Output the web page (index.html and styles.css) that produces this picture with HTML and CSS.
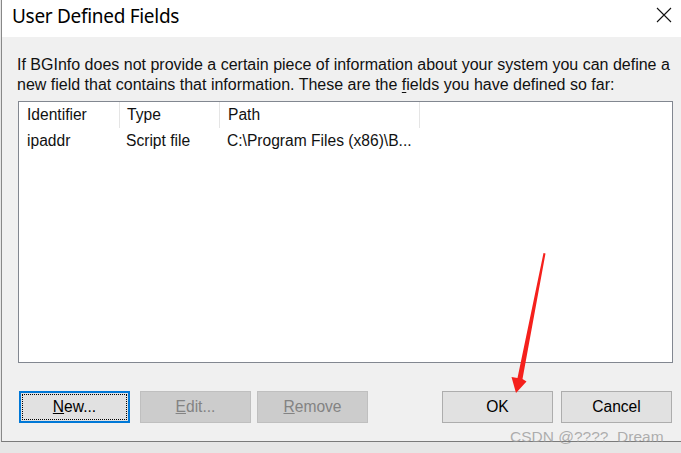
FILE: index.html
```html
<!DOCTYPE html>
<html>
<head>
<meta charset="utf-8">
<link rel="stylesheet" href="styles.css">
</head>
<body>
<div class="window">
  <div class="titlebar">
    <span class="title">User Defined Fields</span>
    <svg class="close" width="16" height="16" viewBox="0 0 16 16"><path d="M1 1 L15 15 M15 1 L1 15" stroke="#111" stroke-width="1.1" fill="none"/></svg>
  </div>
  <div class="body">
    <p class="intro">If BGInfo does not provide a certain piece of information about your system you can define a new field that contains that information. These are the <u>f</u>ields you have defined so far:</p>
    <div class="listbox">
      <div class="row header">
        <div class="cell c1">Identifier</div>
        <div class="cell c2">Type</div>
        <div class="cell c3">Path</div>
      </div>
      <div class="row">
        <div class="cell c1">ipaddr</div>
        <div class="cell c2">Script file</div>
        <div class="cell c3">C:\Program Files (x86)\B...</div>
      </div>
    </div>
    <div class="buttons">
      <div class="group left">
        <button class="btn focus"><span class="focusrect"><u>N</u>ew...</span></button>
        <button class="btn disabled"><u>E</u>dit...</button>
        <button class="btn disabled r"><u>R</u>emove</button>
      </div>
      <div class="group right">
        <button class="btn">OK</button>
        <button class="btn">Cancel</button>
      </div>
    </div>
  </div>
</div>
<div class="watermark">CSDN @????&nbsp; Dream</div>
<svg class="arrow" width="681" height="453" viewBox="0 0 681 453"><polygon points="543.5,253 545.5,253.5 522.5,379 526.5,381.5 516,393 511.5,377 517.5,378" fill="#f5201c"/></svg>
</body>
</html>
```
FILE: styles.css
```css
* { box-sizing: border-box; }
html, body { margin: 0; padding: 0; }
body {
  width: 681px;
  height: 453px;
  overflow: hidden;
  background: #e6e6e6;
  position: relative;
  font-family: "Liberation Sans", Arial, sans-serif;
  color: #000;
}
.window {
  margin-left: 1px;
  width: 680px;
  height: 442px;
  border-left: 1px solid #888;
  border-bottom: 1px solid #7a7a7a;
  background: #f0f0f0;
  display: flex;
  flex-direction: column;
}
.titlebar {
  height: 37px;
  background: #fff;
  display: flex;
  align-items: center;
  justify-content: space-between;
  padding-left: 10px;
  padding-right: 9px;
}
.title {
  font-family: "Noto Sans", "Open Sans", sans-serif;
  font-size: 19px;
  letter-spacing: -0.3px;
  margin-top: -6px;
}
.close { margin-top: -7px; }
.body {
  flex: 1;
  padding: 18px 0 0 15px;
  display: flex;
  flex-direction: column;
}
.intro {
  margin: 0;
  font-size: 16px;
  line-height: 20px;
  width: 662px;
  color: #111;
}
.intro u { text-decoration-thickness: 1px; text-underline-offset: 2px; }
.listbox {
  margin-top: 6px;
  margin-left: 1px;
  width: 655px;
  height: 262px;
  background: #fff;
  border: 1px solid #828790;
  font-size: 15.6px;
  color: #111;
}
.row { display: flex; height: 25px; align-items: center; }
.row.header { height: 26px; }
.cell { padding-left: 8px; white-space: nowrap; height: 100%; display: flex; align-items: center; }
.c1 { width: 100px; }
.c2 { width: 100px; padding-left: 7px; }
.c3 { width: 200px; }
.header .cell { border-right: 1px solid #e5e5e5; }
.header .c1 { width: 101px; }
.header .c2 { width: 100px; }
.header .c3 { width: 200px; }
.buttons {
  margin-top: 28px;
  display: flex;
  justify-content: space-between;
  width: 653px;
  margin-left: 2px;
}
.group { display: flex; }
.left { gap: 10px; }
.left .r { margin-left: -4px; }
.right { gap: 8px; }
.btn {
  width: 111px;
  height: 32px;
  padding: 0;
  background: #e1e1e1;
  border: 1px solid #adadad;
  font-family: "Liberation Sans", Arial, sans-serif;
  font-size: 15.6px;
  color: #000;
  display: flex;
  align-items: center;
  justify-content: center;
}
.btn.focus {
  border: 2px solid #0078d7;
  padding: 1px;
}
.focusrect {
  width: 100%;
  height: 100%;
  border: 1px dotted #000;
  display: flex;
  align-items: center;
  justify-content: center;
}
.btn.disabled {
  background: #cccccc;
  border-color: #bfbfbf;
  color: #838383;
}
.watermark {
  position: absolute;
  left: 510px;
  top: 428px;
  font-family: "Liberation Sans", Arial, sans-serif;
  font-size: 15.5px;
  color: rgba(150,150,150,0.75);
}
.arrow { position: absolute; left: 0; top: 0; }
```
